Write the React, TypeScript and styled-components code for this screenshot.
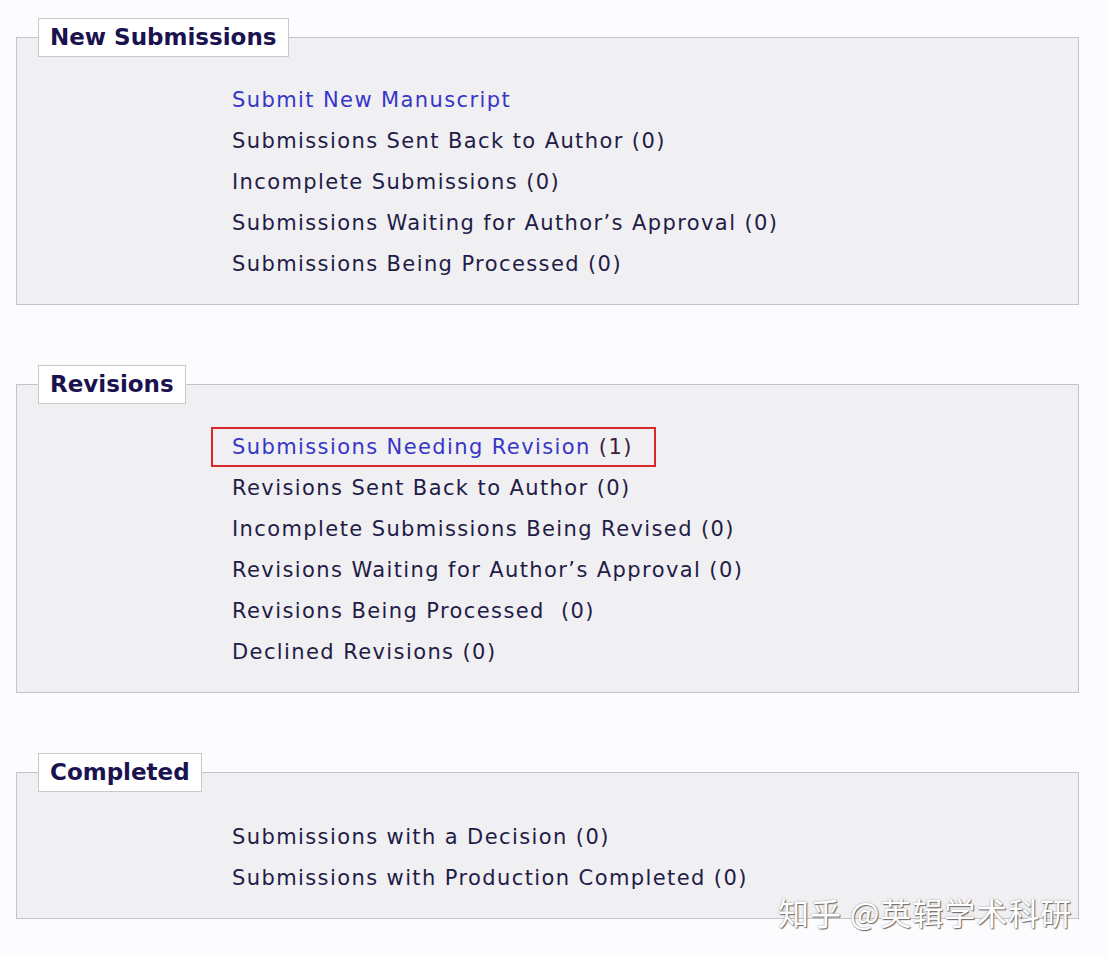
import React from 'react';
import styled, { createGlobalStyle } from 'styled-components';

const GlobalStyle = createGlobalStyle`
  html, body {
    margin: 0;
    padding: 0;
    background: #fcfbfd;
  }
  body {
    font-family: "DejaVu Sans", Verdana, sans-serif;
  }
`;

type Item = { label: string; count?: string; link?: boolean; marked?: boolean };

type Section = { title: string; items: Item[]; top?: number };

const sections: Section[] = [
    {
        title: 'New Submissions',
        items: [
            { label: 'Submit New Manuscript', link: true },
            { label: 'Submissions Sent Back to Author', count: '(0)' },
            { label: 'Incomplete Submissions', count: '(0)' },
            { label: 'Submissions Waiting for Author\u2019s Approval', count: '(0)' },
            { label: 'Submissions Being Processed', count: '(0)' },
        ],
    },
    {
        title: 'Revisions',
        items: [
            { label: 'Submissions Needing Revision', count: '(1)', link: true, marked: true },
            { label: 'Revisions Sent Back to Author', count: '(0)' },
            { label: 'Incomplete Submissions Being Revised', count: '(0)' },
            { label: 'Revisions Waiting for Author\u2019s Approval', count: '(0)' },
            { label: 'Revisions Being Processed\u00a0', count: '(0)' },
            { label: 'Declined Revisions', count: '(0)' },
        ],
    },
    {
        title: 'Completed',
        top: 24,
        items: [
            { label: 'Submissions with a Decision', count: '(0)' },
            { label: 'Submissions with Production Completed', count: '(0)' },
        ],
    },
];

export default function App() {
    return (
        <>
            <GlobalStyle />
            <Page>
                {sections.map((s) => (
                    <Panel key={s.title} $top={s.top}>
                        <Legend>{s.title}</Legend>
                        <List>
                            {s.items.map((it) => (
                                <Row key={it.label}>
                                    <Entry $marked={it.marked}>
                                        {it.link ? <Link>{it.label}</Link> : <Text>{it.label}</Text>}
                                        {it.count && <Count $dark={it.marked}> {it.count}</Count>}
                                    </Entry>
                                </Row>
                            ))}
                        </List>
                    </Panel>
                ))}
                <Watermark>知乎 @英辑学术科研</Watermark>
            </Page>
        </>
    );
}

const Page = styled.div`
    position: relative;
    width: 1108px;
    height: 956px;
    padding: 18px 0 0 16px;
    box-sizing: border-box;
    display: flex;
    flex-direction: column;
    gap: 60px;
`;

const Panel = styled.fieldset<{ $top?: number }>`
    margin: 0;
    width: 1063px;
    box-sizing: border-box;
    border: 1px solid #c4c3c6;
    background: #f0eff1;
    padding: ${(p) => p.$top ?? 22}px 0 20px 0;
`;

const Legend = styled.legend`
    margin-left: 21px;
    padding: 0 11px;
    height: 39px;
    box-sizing: border-box;
    line-height: 37px;
    background: #ffffff;
    border: 1px solid #c9c8cb;
    font-size: 23px;
    font-weight: bold;
    color: #1b1250;
`;

const List = styled.div`
    display: flex;
    flex-direction: column;
    padding-left: 215px;
`;

const Row = styled.div`
    height: 41px;
    display: flex;
    align-items: center;
`;

const Entry = styled.span<{ $marked?: boolean }>`
    font-size: 21px;
    letter-spacing: 1.4px;
    white-space: pre;
    ${(p) =>
        p.$marked &&
        `
        margin-left: -21px;
        padding: 0 21px 0 19px;
        height: 40px;
        display: flex;
        align-items: center;
        box-sizing: border-box;
        border: 2.5px solid #d8262b;
    `}
`;

const Link = styled.span`
    color: #3636c8;
`;

const Text = styled.span`
    color: #1f1c48;
`;

const Count = styled.span<{ $dark?: boolean }>`
    color: ${(p) => (p.$dark ? '#3d1c3e' : '#1f1c48')};
`;

const Watermark = styled.div`
    position: absolute;
    left: 778px;
    top: 889px;
    font-family: "Noto Sans CJK SC", sans-serif;
    font-size: 31px;
    letter-spacing: 1px;
    color: #ffffff;
    text-shadow: 1px 1px 1px #6a6a6a, 0 0 2px #9a9a9a;
    white-space: nowrap;
`;
